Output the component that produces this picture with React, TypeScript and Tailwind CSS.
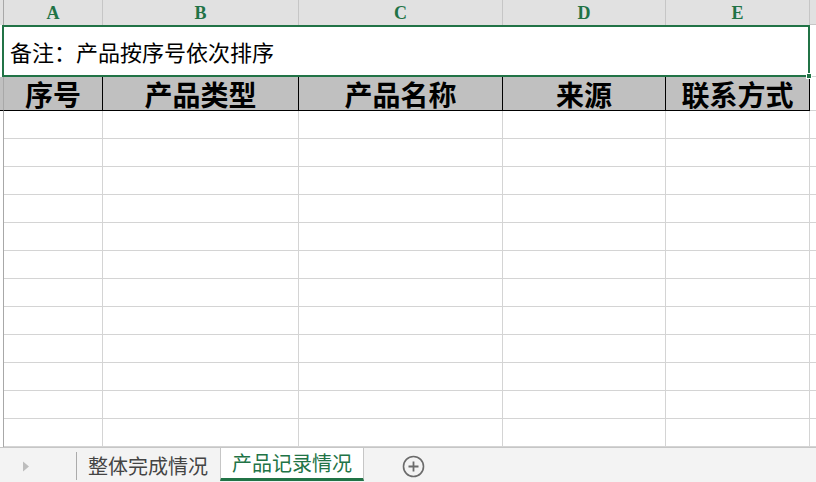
import React from 'react';

const colWidths = ['w-[99px]', 'w-[196px]', 'w-[204px]', 'w-[163px]', 'w-[144px]'];
const colLetters = ['A', 'B', 'C', 'D', 'E'];
const headers = ['序号', '产品类型', '产品名称', '来源', '联系方式'];
const bodyRows = Array.from({ length: 12 }, (_, i) => i);

const cjk = { fontFamily: '"Noto Sans CJK SC", "Noto Sans", sans-serif' };

const App: React.FC = () => {
  return (
    <div className="w-[816px] h-[482px] bg-white overflow-hidden flex flex-col select-none" style={cjk}>
      {/* column letters */}
      <div className="flex h-[25px] bg-[#e1e1e1] shrink-0">
        <div className="w-[4px] border-r border-[#a8a8a8]" />
        {colLetters.map((letter, i) => (
          <div
            key={letter}
            className={`${colWidths[i]} flex items-center justify-center border-r border-[#c6c6c6] text-[18px] font-bold text-[#217346] pt-[2px]`}
            style={{ fontFamily: '"Liberation Serif", serif' }}
          >
            {letter}
          </div>
        ))}
        <div className="flex-1 border-b border-[#c6c6c6]" />
      </div>

      {/* merged note cell with active selection */}
      <div className="flex h-[52px] shrink-0">
        <div className="w-[2px]" />
        <div className="relative w-[808px] border-2 border-[#217346] flex items-center pl-[6px] text-[22px] text-black">
          备注：产品按序号依次排序
          <div className="absolute -right-[4px] -bottom-[4px] w-[6px] h-[6px] bg-[#217346] border border-white" />
        </div>
        <div className="flex-1 border-b border-[#d4d4d4]" />
      </div>

      {/* table heading row */}
      <div className="flex h-[34px] shrink-0">
        <div className="w-[4px] bg-[#c0c0c0] border-r border-[#a8a8a8] border-b border-b-black" />
        {headers.map((h, i) => (
          <div
            key={h}
            className={`${colWidths[i]} flex items-end justify-center bg-[#c0c0c0] border-r border-b border-black text-[28px] leading-none font-bold text-black pb-[2px]`}
          >
            {h}
          </div>
        ))}
        <div className="flex-1 border-b border-[#d4d4d4]" />
      </div>

      {/* empty body rows */}
      <div className="flex flex-col flex-1">
        {bodyRows.map((r) => (
          <div key={r} className="flex h-[28px] shrink-0">
            <div className="w-[4px] border-r border-[#a8a8a8]" />
            {colWidths.map((w, i) => (
              <div key={i} className={`${w} border-r border-b border-[#d4d4d4]`} />
            ))}
            <div className="flex-1 border-b border-[#d4d4d4]" />
          </div>
        ))}
      </div>

      {/* sheet tabs */}
      <div className="h-[35px] shrink-0 flex flex-col bg-[#f3f3f3] border-t border-[#c6c6c6]">
        <div className="flex flex-1 items-stretch">
          <div className="w-[76px] flex items-center pl-[22px]">
            <svg width="8" height="11" viewBox="0 0 8 11">
              <path d="M1 0.5 L7 5.5 L1 10.5 Z" fill="#bdbdbd" />
            </svg>
          </div>
          <div className="w-px bg-[#ababab] my-[4px]" />
          <div className="w-[143px] flex items-center pl-[11px] text-[20px] text-[#444444]">整体完成情况</div>
          <div className="w-[144px] flex items-center justify-center bg-white border-x border-[#c6c6c6] border-b-[3px] border-b-[#217346] text-[20px] text-[#217346] mb-[3px]">
            产品记录情况
          </div>
          <div className="flex items-center pl-[38px]">
            <svg width="23" height="23" viewBox="0 0 23 23">
              <circle cx="11.5" cy="11.5" r="10" fill="none" stroke="#6b6b6b" strokeWidth="1.6" />
              <path d="M11.5 6.5 V16.5 M6.5 11.5 H16.5" stroke="#6b6b6b" strokeWidth="1.8" />
            </svg>
          </div>
        </div>
        <div className="h-[2px] bg-[#217346]" />
      </div>
    </div>
  );
};

export default App;
